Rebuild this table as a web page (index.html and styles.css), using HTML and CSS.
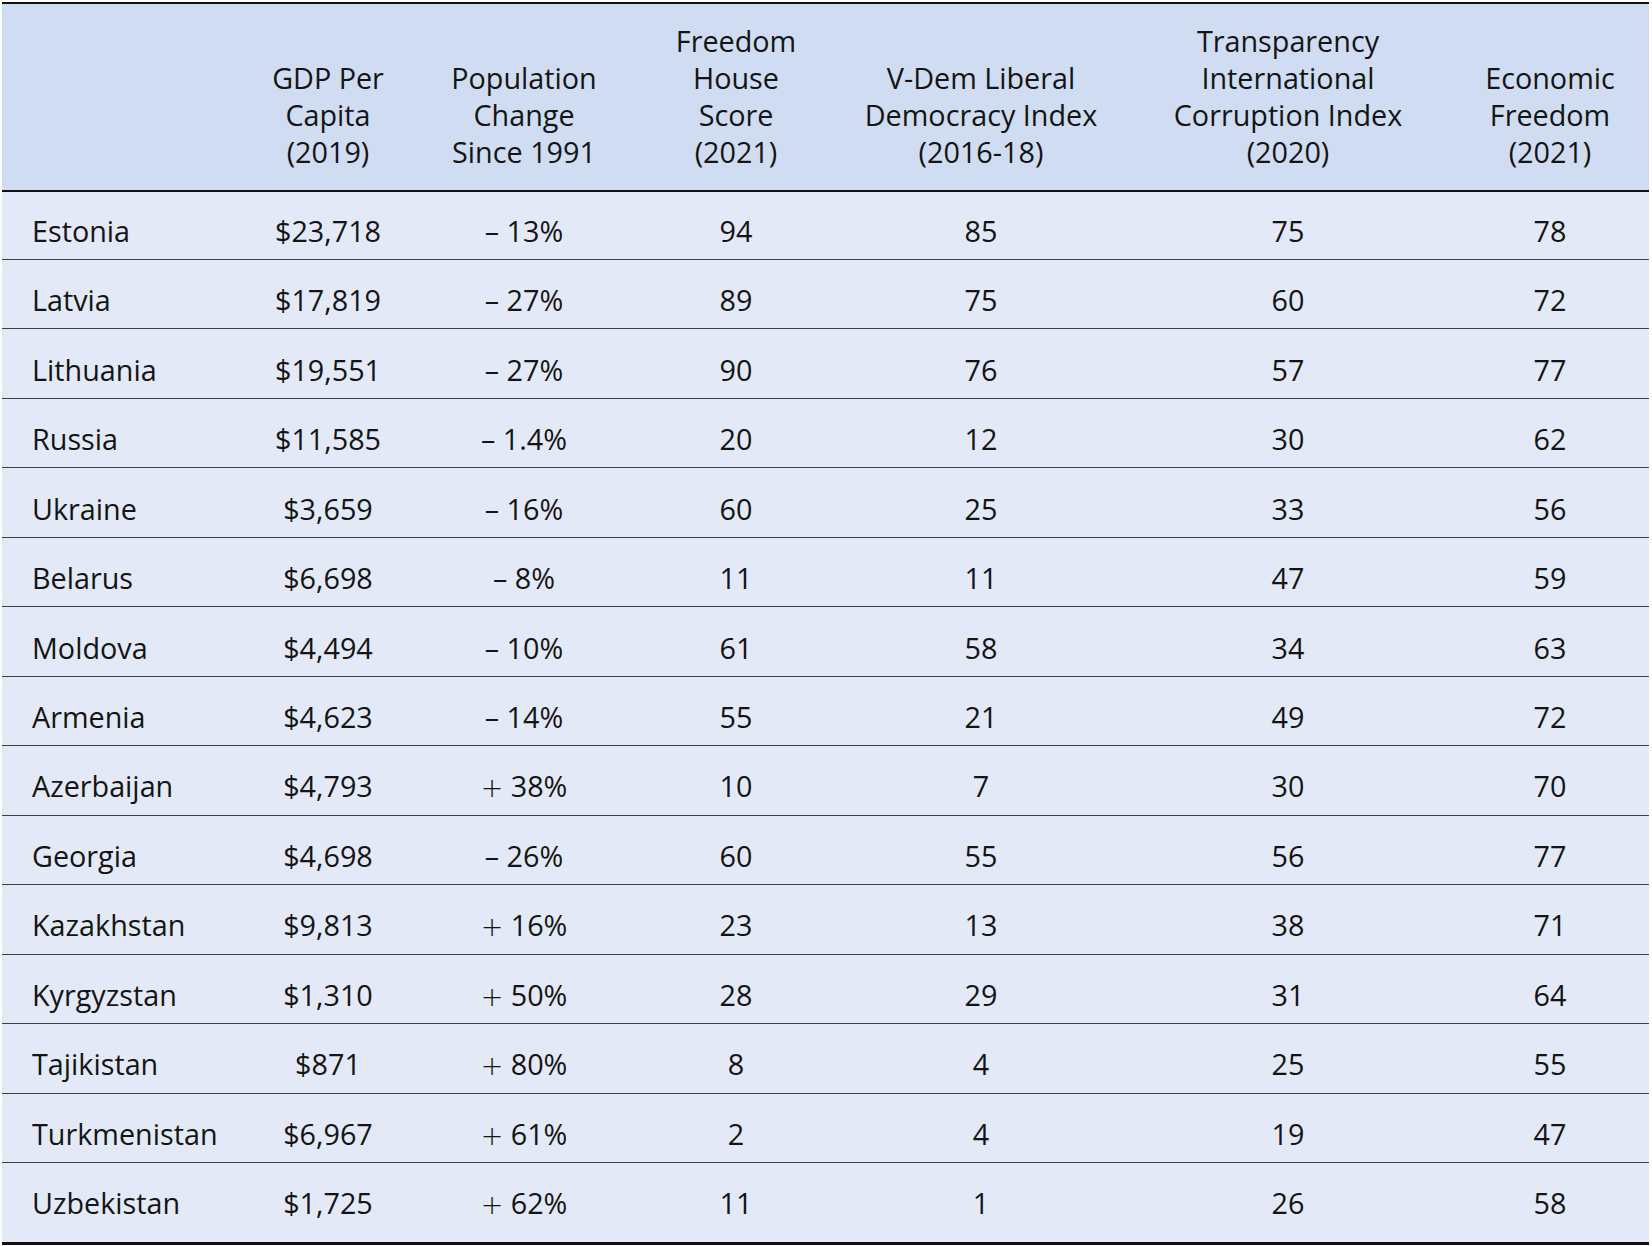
FILE: index.html
```html
<!DOCTYPE html>
<html lang="en">
<head>
<meta charset="utf-8">
<title>Post-Soviet States Indicators</title>
<link rel="stylesheet" href="styles.css">
</head>
<body>
<div class="wrap">
<table class="data">
  <colgroup>
    <col class="c1"><col class="c2"><col class="c3"><col class="c4"><col class="c5"><col class="c6"><col class="c7">
  </colgroup>
  <thead>
    <tr>
      <th class="name"></th>
      <th>GDP Per<br>Capita<br>(2019)</th>
      <th>Population<br>Change<br>Since 1991</th>
      <th>Freedom<br>House<br>Score<br>(2021)</th>
      <th>V-Dem Liberal<br>Democracy Index<br>(2016-18)</th>
      <th>Transparency<br>International<br>Corruption Index<br>(2020)</th>
      <th class="last">Economic<br>Freedom<br>(2021)</th>
    </tr>
  </thead>
  <tbody>
    <tr><td class="name">Estonia</td><td>$23,718</td><td>– 13%</td><td>94</td><td>85</td><td>75</td><td class="last">78</td></tr>
    <tr><td class="name">Latvia</td><td>$17,819</td><td>– 27%</td><td>89</td><td>75</td><td>60</td><td class="last">72</td></tr>
    <tr><td class="name">Lithuania</td><td>$19,551</td><td>– 27%</td><td>90</td><td>76</td><td>57</td><td class="last">77</td></tr>
    <tr><td class="name">Russia</td><td>$11,585</td><td>– 1.4%</td><td>20</td><td>12</td><td>30</td><td class="last">62</td></tr>
    <tr><td class="name">Ukraine</td><td>$3,659</td><td>– 16%</td><td>60</td><td>25</td><td>33</td><td class="last">56</td></tr>
    <tr><td class="name">Belarus</td><td>$6,698</td><td>– 8%</td><td>11</td><td>11</td><td>47</td><td class="last">59</td></tr>
    <tr><td class="name">Moldova</td><td>$4,494</td><td>– 10%</td><td>61</td><td>58</td><td>34</td><td class="last">63</td></tr>
    <tr><td class="name">Armenia</td><td>$4,623</td><td>– 14%</td><td>55</td><td>21</td><td>49</td><td class="last">72</td></tr>
    <tr><td class="name">Azerbaijan</td><td>$4,793</td><td><span class="plus">+</span> 38%</td><td>10</td><td>7</td><td>30</td><td class="last">70</td></tr>
    <tr><td class="name">Georgia</td><td>$4,698</td><td>– 26%</td><td>60</td><td>55</td><td>56</td><td class="last">77</td></tr>
    <tr><td class="name">Kazakhstan</td><td>$9,813</td><td><span class="plus">+</span> 16%</td><td>23</td><td>13</td><td>38</td><td class="last">71</td></tr>
    <tr><td class="name">Kyrgyzstan</td><td>$1,310</td><td><span class="plus">+</span> 50%</td><td>28</td><td>29</td><td>31</td><td class="last">64</td></tr>
    <tr><td class="name">Tajikistan</td><td>$871</td><td><span class="plus">+</span> 80%</td><td>8</td><td>4</td><td>25</td><td class="last">55</td></tr>
    <tr><td class="name">Turkmenistan</td><td>$6,967</td><td><span class="plus">+</span> 61%</td><td>2</td><td>4</td><td>19</td><td class="last">47</td></tr>
    <tr class="final"><td class="name">Uzbekistan</td><td>$1,725</td><td><span class="plus">+</span> 62%</td><td>11</td><td>1</td><td>26</td><td class="last">58</td></tr>
  </tbody>
</table>
</div>
</body>
</html>
```

FILE: styles.css
```css
html, body {
  margin: 0;
  padding: 0;
  background: #ffffff;
}

.wrap {
  padding: 2px 3px 0 2px;
}

.data {
  width: 1647px;
  border-collapse: collapse;
  table-layout: fixed;
  font-family: "Open Sans", Lato, sans-serif;
  font-size: 28.75px;
  color: #141414;
  background: #e3e9f6;
  border-top: 2.5px solid #111;
  border-bottom: 3px solid #111;
}

.c1 { width: 265px; }
.c2 { width: 122px; }
.c3 { width: 270px; }
.c4 { width: 154px; }
.c5 { width: 336px; }
.c6 { width: 278px; }
.c7 { width: 222px; }

thead th {
  background: #cfdcf1;
  font-weight: 400;
  line-height: 37px;
  vertical-align: bottom;
  text-align: center;
  padding: 18px 0 19.5px 0;
  border-bottom: 2px solid #111;
}

tbody td {
  text-align: center;
  line-height: 37px;
  padding: 21.2px 0 10.3px 0;
  border-bottom: 1px solid #3c4048;
  white-space: nowrap;
}

tbody tr:first-child td {
  padding-top: 20.1px;
}

tbody tr.final td {
  padding-bottom: 21px;
  border-bottom: none;
}

.name {
  text-align: left;
  padding-left: 30px;
}

tbody td.name {
  text-align: left;
  padding-left: 30px;
}

.last,
tbody td.last {
  padding-left: 24px;
}

.plus {
  font-weight: 300;
  font-family: "DejaVu Sans", sans-serif;
  font-size: 27px;
  line-height: 0;
}
```
